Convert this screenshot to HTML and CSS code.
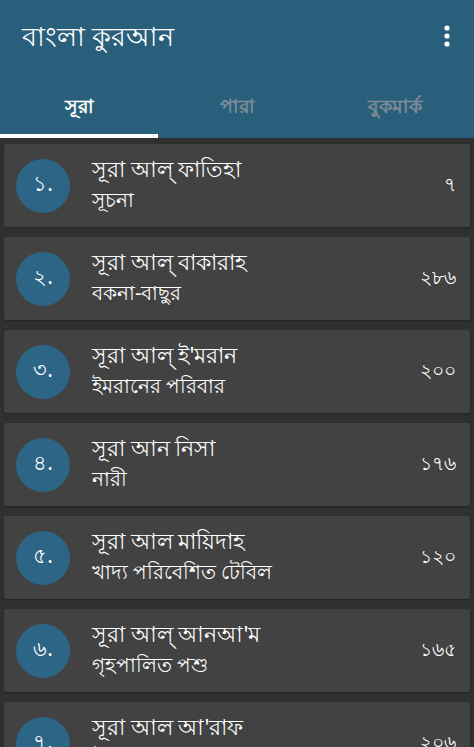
FILE: index.html
```html
<!DOCTYPE html>
<html lang="bn">
<head>
    <meta charset="UTF-8">
    <meta name="viewport" content="width=device-width, initial-scale=1.0">
    <title>বাংলা কুরআন</title>
    <link rel="stylesheet" href="styles.css">
</head>
<body>
    <header class="appbar">
        <div class="toolbar">
            <h1 class="app-title">বাংলা কুরআন</h1>
            <button class="menu-btn" aria-label="menu">
                <svg width="6" height="22" viewBox="0 0 6 22">
                    <circle cx="3" cy="3" r="2.6" fill="#fff"></circle>
                    <circle cx="3" cy="11" r="2.6" fill="#fff"></circle>
                    <circle cx="3" cy="19" r="2.6" fill="#fff"></circle>
                </svg>
            </button>
        </div>
        <nav class="tabs">
            <div class="tab active">সূরা</div>
            <div class="tab">পারা</div>
            <div class="tab">বুকমার্ক</div>
        </nav>
    </header>

    <main class="sura-list">
        <div class="sura-card">
            <div class="sura-no">১.</div>
            <div class="sura-info">
                <div class="sura-name">সূরা আল্ ফাতিহা</div>
                <div class="sura-meaning">সূচনা</div>
            </div>
            <div class="sura-ayat">৭</div>
        </div>
        <div class="sura-card">
            <div class="sura-no">২.</div>
            <div class="sura-info">
                <div class="sura-name">সূরা আল্ বাকারাহ</div>
                <div class="sura-meaning">বকনা-বাছুর</div>
            </div>
            <div class="sura-ayat">২৮৬</div>
        </div>
        <div class="sura-card">
            <div class="sura-no">৩.</div>
            <div class="sura-info">
                <div class="sura-name">সূরা আল্ ই'মরান</div>
                <div class="sura-meaning">ইমরানের পরিবার</div>
            </div>
            <div class="sura-ayat">২০০</div>
        </div>
        <div class="sura-card">
            <div class="sura-no">৪.</div>
            <div class="sura-info">
                <div class="sura-name">সূরা আন নিসা</div>
                <div class="sura-meaning">নারী</div>
            </div>
            <div class="sura-ayat">১৭৬</div>
        </div>
        <div class="sura-card">
            <div class="sura-no">৫.</div>
            <div class="sura-info">
                <div class="sura-name">সূরা আল মায়িদাহ</div>
                <div class="sura-meaning">খাদ্য পরিবেশিত টেবিল</div>
            </div>
            <div class="sura-ayat">১২০</div>
        </div>
        <div class="sura-card">
            <div class="sura-no">৬.</div>
            <div class="sura-info">
                <div class="sura-name">সূরা আল্ আনআ'ম</div>
                <div class="sura-meaning">গৃহপালিত পশু</div>
            </div>
            <div class="sura-ayat">১৬৫</div>
        </div>
        <div class="sura-card">
            <div class="sura-no">৭.</div>
            <div class="sura-info">
                <div class="sura-name">সূরা আল আ'রাফ</div>
                <div class="sura-meaning">উচ্চস্থান</div>
            </div>
            <div class="sura-ayat">২০৬</div>
        </div>
    </main>
</body>
</html>
```

FILE: styles.css
```css
* {
    margin: 0;
    padding: 0;
    box-sizing: border-box;
}

body {
    background: #303030;
    font-family: "Noto Sans", sans-serif;
    color: #fff;
    height: 747px;
    overflow: hidden;
}

.appbar {
    background: #2a5f7b;
}

.toolbar {
    height: 76px;
    display: flex;
    align-items: center;
    justify-content: space-between;
    padding: 0 24px 0 22px;
}

.app-title {
    font-size: 27px;
    font-weight: 400;
}

.menu-btn {
    background: none;
    border: none;
    display: flex;
    padding: 4px;
    margin-right: -4px;
    margin-bottom: 4px;
}

.tabs {
    display: grid;
    grid-template-columns: 158px 1fr 1fr;
    height: 62px;
}

.tab {
    display: flex;
    align-items: center;
    justify-content: center;
    font-size: 19px;
    font-weight: 700;
    color: #7b8c96;
    border-bottom: 4px solid transparent;
    padding-top: 6px;
}

.tab.active {
    color: #fff;
    border-bottom-color: #fff;
}

.sura-list {
    display: flex;
    flex-direction: column;
    gap: 10px;
    padding: 6px 4px;
}

.sura-card {
    height: 83px;
    flex-shrink: 0;
    background: #424242;
    border-radius: 2px;
    display: flex;
    align-items: center;
    padding: 0 14px 0 12px;
    box-shadow: 0 1px 2px rgba(0, 0, 0, 0.3);
}

.sura-no {
    width: 54px;
    height: 54px;
    border-radius: 50%;
    background: #2c6586;
    display: flex;
    align-items: center;
    justify-content: center;
    font-size: 21px;
    flex-shrink: 0;
}

.sura-info {
    flex: 1;
    padding-left: 22px;
    padding-bottom: 2px;
}

.sura-name {
    font-size: 22px;
    line-height: 31px;
}

.sura-meaning {
    font-size: 20px;
    line-height: 32px;
}

.sura-ayat {
    font-size: 19px;
}
```
